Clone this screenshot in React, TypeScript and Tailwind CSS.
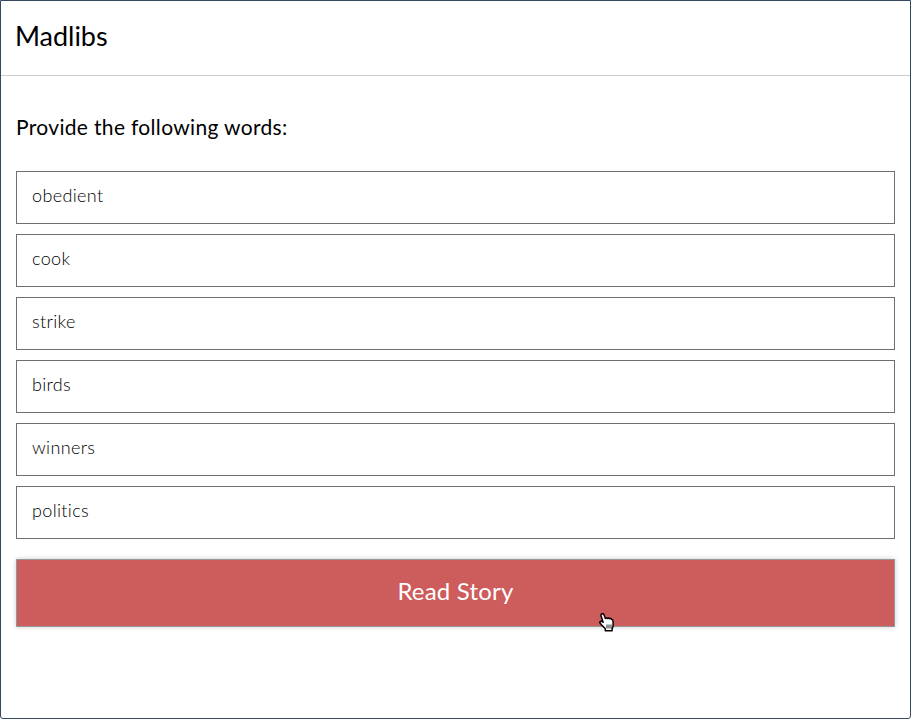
const words = ["obedient", "cook", "strike", "birds", "winners", "politics"];

function HandCursor() {
  return (
    <svg
      className="pointer-events-none absolute left-[583px] top-[54px]"
      width="16"
      height="20"
      viewBox="0 0 16 20"
    >
      <path
        d="M2.500 1c1-.8 2.200-.2 2.600 1l1.300 3.400c.6-.7 1.600-.6 2.100.1.600-.5 1.500-.4 2 .2.700-.4 1.600-.2 2 .5.900.2 1.600.9 1.600 2v4.300c0 1.200-.4 2.200-1 3v2.200H6.300v-1.900L2.700 12 1 10.100c-.5-.8 0-1.800 1-1.800.8 0 1.500.4 2.100 1L2.100 3c-.2-.8-.1-1.500.4-2z"
        fill="#fff"
        stroke="#000"
        strokeWidth="1.500"
        strokeLinejoin="round"
      />
      <path d="M8 11.500v4M10 11.500v4M12 11.500v4" stroke="#222" strokeWidth="1" />
    </svg>
  );
}

export default function App() {
  return (
    <div className="box-border flex h-[719px] w-[911px] flex-col rounded-b-[3px] border border-[#34495e] bg-white font-['Lato',sans-serif] text-black">
      <header className="flex h-[75px] shrink-0 items-center border-b border-[#ccc] px-[14px] pb-[5px]">
        <h1 className="text-[27px] font-normal leading-none tracking-[-0.05px]">Madlibs</h1>
      </header>

      <main className="flex flex-col px-[15px]">
        <h2 className="mt-[37px] text-[21px] font-normal leading-[28px] tracking-[0.33px]">Provide the following words:</h2>

        <div className="mt-[30px] flex flex-col gap-[10px]">
          {words.map((w) => (
            <input
              key={w}
              readOnly
              value={w}
              className="box-border h-[53px] w-full border border-[#6f6f6f] bg-white px-[15px] pb-[6px] text-[18px] font-light tracking-[0.35px] text-black outline-none"
            />
          ))}
        </div>

        <div className="relative mt-[20px]">
          <button className="box-border flex h-[68px] w-full items-center justify-center border border-[#979797] bg-[#cd5c5c] pb-[5px] text-[24px] font-normal tracking-[0.2px] text-white shadow-[0_0_5px_rgba(0,0,0,0.2)]">
            Read Story
          </button>
          <HandCursor />
        </div>
      </main>
    </div>
  );
}
